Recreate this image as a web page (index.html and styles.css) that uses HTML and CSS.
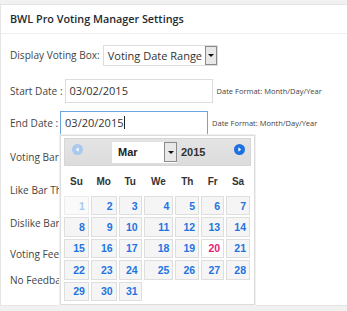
FILE: index.html
```html
<!DOCTYPE html>
<html>
<head>
<meta charset="utf-8">
<link rel="stylesheet" href="styles.css">
</head>
<body>
<div class="panel">
  <h3 class="panel-title">BWL Pro Voting Manager Settings</h3>
  <div class="form">
    <div class="row">
      <span class="label">Display Voting Box:</span>
      <span class="select"><span class="select-text">Voting Date Range</span><span class="select-btn"><span class="tri"></span></span></span>
    </div>
    <div class="row">
      <span class="label">Start Date :</span>
      <span class="input"><span class="input-text">03/02/2015</span></span>
      <span class="note">Date Format: Month/Day/Year</span>
    </div>
    <div class="row">
      <span class="label">End Date :</span>
      <span class="input focus"><span class="input-text">03/20/2015</span><span class="caret"></span></span>
      <span class="note">Date Format: Month/Day/Year</span>
    </div>
    <div class="row"><span class="label clipped">Voting Bar</span></div>
    <div class="row"><span class="label clipped">Like Bar Th</span></div>
    <div class="row"><span class="label clipped">Dislike Bar</span></div>
    <div class="row"><span class="label clipped">Voting Fee</span></div>
    <div class="row"><span class="label clipped">No Feedba</span></div>
  </div>

  <div class="datepicker">
    <div class="dp-header">
      <span class="dp-nav prev"><svg width="11" height="11" viewBox="0 0 11 11"><circle cx="5.5" cy="5.5" r="5.5" fill="#a9c9ee"/><path d="M6.6 3.2 L3.8 5.5 L6.6 7.8 Z" fill="#fff"/></svg></span>
      <span class="dp-title">
        <span class="dp-month"><span class="dp-month-text">Mar</span><span class="select-btn small"><span class="tri"></span></span></span>
        <span class="dp-year">2015</span>
      </span>
      <span class="dp-nav next"><svg width="11" height="11" viewBox="0 0 11 11"><circle cx="5.5" cy="5.5" r="5.5" fill="#1b72e0"/><path d="M4.4 3.2 L7.2 5.5 L4.4 7.8 Z" fill="#fff"/></svg></span>
    </div>
    <table class="dp-table">
      <thead>
        <tr><th class="c1">Su</th><th class="c2">Mo</th><th class="c3">Tu</th><th class="c4">We</th><th class="c5">Th</th><th class="c6">Fr</th><th class="c7">Sa</th></tr>
      </thead>
      <tbody>
        <tr><td class="disabled">1</td><td>2</td><td>3</td><td>4</td><td>5</td><td>6</td><td>7</td></tr>
        <tr><td>8</td><td>9</td><td>10</td><td>11</td><td>12</td><td>13</td><td>14</td></tr>
        <tr><td>15</td><td>16</td><td>17</td><td>18</td><td>19</td><td class="today">20</td><td>21</td></tr>
        <tr><td>22</td><td>23</td><td>24</td><td>25</td><td>26</td><td>27</td><td>28</td></tr>
        <tr><td>29</td><td>30</td><td>31</td><td class="empty"></td><td class="empty"></td><td class="empty"></td><td class="empty"></td></tr>
      </tbody>
    </table>
  </div>
</div>
</body>
</html>
```
FILE: styles.css
```css
html, body {
  margin: 0;
  padding: 0;
}
body {
  background: #f1f1f1;
  width: 347px;
  height: 311px;
  overflow: hidden;
  font-family: "Open Sans", "Liberation Sans", sans-serif;
  color: #444;
}
.panel {
  position: relative;
  margin-top: 4px;
  width: 360px;
  height: 302px;
  background: #fff;
  border: 1px solid #e5e5e5;
  border-right: none;
  box-sizing: border-box;
}
.panel-title {
  margin: 0;
  height: 29px;
  box-sizing: border-box;
  padding: 0 0 0 9px;
  line-height: 28px;
  font-size: 10.8px;
  font-weight: 600;
  color: #23282d;
  border-bottom: 1px solid #eee;
}
.form {
  display: grid;
  grid-template-rows: 42px 29px 35px 34px 32px 34px 28px 24px;
  padding-left: 9px;
}
.row {
  display: flex;
  align-items: center;
  white-space: nowrap;
}
.label {
  font-size: 10.1px;
  color: #444;
}
.label.clipped {
  display: block;
  max-width: 51px;
  overflow: hidden;
  white-space: nowrap;
}
.select {
  display: flex;
  align-items: center;
  margin-left: 3px;
  height: 21px;
  width: 115px;
  box-sizing: border-box;
  border: 1px solid #ddd;
  background: #fff;
  padding-left: 4px;
}
.select-text {
  flex: 1;
  font-size: 11px;
  color: #333;
}
.select-btn {
  display: flex;
  align-items: center;
  justify-content: center;
  width: 12px;
  height: 19px;
  box-sizing: border-box;
  background: #e8e8e8;
  border: 1px solid #8a8a8a;
}
.select-btn.small {
  width: 13px;
  height: 20px;
}
.tri {
  width: 0;
  height: 0;
  border-left: 3px solid transparent;
  border-right: 3px solid transparent;
  border-top: 3px solid #111;
}
.input {
  display: flex;
  align-items: center;
  margin-left: 2px;
  width: 148px;
  height: 24px;
  box-sizing: border-box;
  border: 1px solid #ddd;
  padding-left: 4px;
  background: #fff;
}
.input.focus {
  border-color: #6aa6dd;
}
.input-text {
  font-size: 11px;
  color: #333;
}
.caret {
  width: 1px;
  height: 13px;
  background: #222;
  margin-left: 1px;
}
.note {
  margin-left: 4px;
  font-size: 7.5px;
  color: #444;
}
.datepicker {
  position: absolute;
  left: 59px;
  top: 130px;
  width: 195px;
  height: 170px;
  box-sizing: border-box;
  background: #fff;
  border: 1px solid #ddd;
  box-shadow: 0 0 0 1px #f0f0f0;
  padding: 2px;
  font-family: "Liberation Sans", Arial, sans-serif;
}
.dp-header {
  display: flex;
  align-items: center;
  height: 28px;
  margin: 0 1px;
  background: linear-gradient(#e4e4e4, #dcdcdc);
  border: 1px solid #d6d6d6;
  box-sizing: border-box;
  padding: 0 5px 0 7px;
}
.dp-nav {
  display: flex;
  width: 11px;
  height: 11px;
  margin-top: -5px;
}
.dp-title {
  flex: 1;
  display: flex;
  align-items: center;
  padding-left: 29px;
}
.dp-month {
  display: flex;
  align-items: center;
  width: 65px;
  height: 21px;
  background: #fff;
  box-sizing: border-box;
  padding-left: 6px;
}
.dp-month-text {
  flex: 1;
  font-size: 11px;
  font-weight: bold;
  color: #222;
}
.dp-year {
  margin-left: 4px;
  font-size: 11px;
  font-weight: bold;
  color: #333;
}
.dp-table {
  border-collapse: separate;
  border-spacing: 2px;
  margin-left: -1px;
  margin-top: 1px;
}
.dp-table th {
  height: 25px;
  padding: 0;
  font-size: 10px;
  font-weight: bold;
  color: #333;
  text-align: center;
}
.c1 { width: 25px; }
.c2 { width: 26px; }
.c3 { width: 23px; }
.c4 { width: 30px; }
.c5 { width: 24px; }
.c6 { width: 23px; }
.c7 { width: 24px; }
.dp-table td {
  height: 19.4px;
  box-sizing: border-box;
  padding: 0 3px 0 0;
  background: #f5f5f5;
  border: 1px solid #dedede;
  text-align: right;
  font-size: 10.5px;
  font-weight: bold;
  color: #1e74e2;
}
.dp-table td.disabled {
  color: #a8c8f0;
  background: #fafafa;
  border-color: #ececec;
}
.dp-table td.today {
  background: #fff;
  color: #e8207a;
}
.dp-table td.empty {
  background: transparent;
  border-color: transparent;
}
```
